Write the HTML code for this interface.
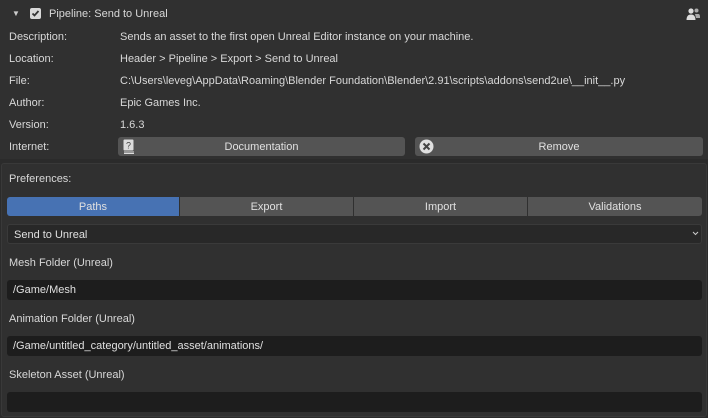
<!DOCTYPE html>
<html><head><style>
*{box-sizing:border-box;margin:0;padding:0}
body{width:708px;height:418px;background:#2b2b2b;font-family:"Liberation Sans","DejaVu Sans",sans-serif;font-size:11px;color:#d8d8d8;position:relative;overflow:hidden}
.top{position:absolute;left:0;top:0;width:708px;height:159px;background:#303030}
.bot{position:absolute;left:1px;top:163px;width:706px;height:254px;background:#303030;border:1px solid #393939;border-radius:3px}
.a{position:absolute;white-space:nowrap}
.btn{position:absolute;background:#545454;border-radius:3px;height:19px;text-align:center;line-height:19px;color:#e0e0e0}
.tab{position:absolute;top:197px;height:19px;background:#545454;text-align:center;line-height:19px;color:#e0e0e0}
.fld{position:absolute;left:7px;width:695px;height:20px;background:#1d1d1d;border-radius:3px;line-height:20px;padding-left:6px;color:#e0e0e0}
</style></head><body>
<div class="top"></div>
<div class="bot"></div>
<div class="a" style="left:12px;top:9px;font-size:8px;color:#ccc">▼</div>
<div class="a" style="left:30px;top:8px;width:11px;height:11px;background:#d8d8d8;border-radius:2px"><svg width="11" height="11"><path d="M2.5 5.5l2 2 4-4.5" stroke="#333" stroke-width="1.8" fill="none"/></svg></div>
<div class="a" style="left:49px;top:8px">Pipeline: Send to Unreal</div>
<svg class="a" style="left:686px;top:7px" width="14" height="14"><circle cx="5" cy="4" r="2.6" fill="#ddd"/><path d="M0.5 13c0-4 2-5.5 4.5-5.5s4.5 1.5 4.5 5.5z" fill="#ddd"/><circle cx="10.5" cy="3.5" r="2" fill="#aaa"/><path d="M9 7h3.5c1 0 1.5 1 1.5 3v1h-4z" fill="#aaa"/></svg>
<div class="a" style="left:9px;top:31px">Description:</div>
<div class="a" style="left:120px;top:31px">Sends an asset to the first open Unreal Editor instance on your machine.</div>
<div class="a" style="left:9px;top:53px">Location:</div>
<div class="a" style="left:120px;top:53px">Header &gt; Pipeline &gt; Export &gt; Send to Unreal</div>
<div class="a" style="left:9px;top:75px">File:</div>
<div class="a" style="left:120px;top:75px">C:\Users\leveg\AppData\Roaming\Blender Foundation\Blender\2.91\scripts\addons\send2ue\__init__.py</div>
<div class="a" style="left:9px;top:97px">Author:</div>
<div class="a" style="left:120px;top:97px">Epic Games Inc.</div>
<div class="a" style="left:9px;top:119px">Version:</div>
<div class="a" style="left:120px;top:119px">1.6.3</div>
<div class="a" style="left:9px;top:141px">Internet:</div>
<div class="btn" style="left:118px;top:137px;width:287px;line-height:20px">Documentation</div>
<svg class="a" style="left:123px;top:139px" width="12" height="15"><rect x="0.5" y="0.5" width="10" height="11" rx="1" fill="#ddd"/><text x="3" y="9.5" font-size="9" fill="#444" font-family="Liberation Sans">?</text><path d="M1 13h10M1 14.5h10" stroke="#ddd"/></svg>
<div class="btn" style="left:415px;top:137px;width:288px;line-height:20px">Remove</div>
<svg class="a" style="left:419px;top:139px" width="15" height="15"><circle cx="7.5" cy="7.5" r="7" fill="#e0e0e0"/><path d="M4.5 4.5l6 6M10.5 4.5l-6 6" stroke="#444" stroke-width="2"/></svg>
<div class="a" style="left:9px;top:173px">Preferences:</div>
<div class="tab" style="left:7px;width:172px;background:#4772b3;border-radius:3px 0 0 3px;line-height:20px">Paths</div>
<div class="tab" style="left:180px;width:173px;line-height:20px">Export</div>
<div class="tab" style="left:354px;width:173px;line-height:20px">Import</div>
<div class="tab" style="left:528px;width:174px;border-radius:0 3px 3px 0;line-height:20px">Validations</div>
<div class="fld" style="top:224px;background:#282828;border:1px solid #3a3a3a">Send to Unreal</div>
<svg class="a" style="left:692px;top:231px" width="7" height="5"><path d="M1 1l2.5 2.5L6 1" stroke="#ccc" fill="none"/></svg>
<div class="a" style="left:9px;top:257px">Mesh Folder (Unreal)</div>
<div class="fld" style="top:280px">/Game/Mesh</div>
<div class="a" style="left:9px;top:313px">Animation Folder (Unreal)</div>
<div class="fld" style="top:336px">/Game/untitled_category/untitled_asset/animations/</div>
<div class="a" style="left:9px;top:369px">Skeleton Asset (Unreal)</div>
<div class="fld" style="top:392px"></div>
</body></html>
